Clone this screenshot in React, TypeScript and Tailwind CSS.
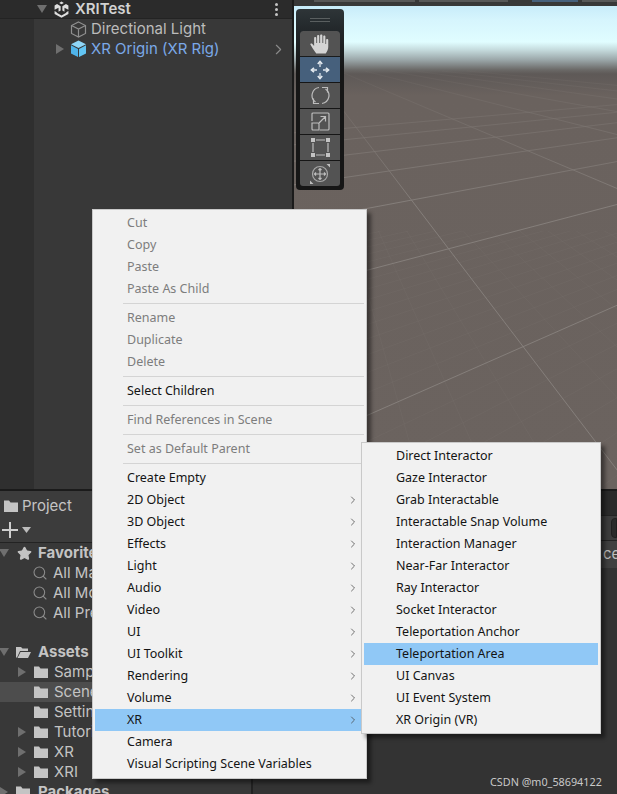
import type { ReactNode } from "react";
import { ChevronRight, Search, Star } from "lucide-react";

const sans = "font-['Inter','Noto_Sans',sans-serif]";
const menuFont = "font-['Noto_Sans','Noto_Sans_CJK_SC',sans-serif]";

type MenuEntry = { label?: string; off?: boolean; sub?: boolean; on?: boolean };

const mainMenu: MenuEntry[] = [
  { label: "Cut", off: true },
  { label: "Copy", off: true },
  { label: "Paste", off: true },
  { label: "Paste As Child", off: true },
  {},
  { label: "Rename", off: true },
  { label: "Duplicate", off: true },
  { label: "Delete", off: true },
  {},
  { label: "Select Children" },
  {},
  { label: "Find References in Scene", off: true },
  {},
  { label: "Set as Default Parent", off: true },
  {},
  { label: "Create Empty" },
  { label: "2D Object", sub: true },
  { label: "3D Object", sub: true },
  { label: "Effects", sub: true },
  { label: "Light", sub: true },
  { label: "Audio", sub: true },
  { label: "Video", sub: true },
  { label: "UI", sub: true },
  { label: "UI Toolkit", sub: true },
  { label: "Rendering", sub: true },
  { label: "Volume", sub: true },
  { label: "XR", sub: true, on: true },
  { label: "Camera" },
  { label: "Visual Scripting Scene Variables" },
];

const xrMenu: MenuEntry[] = [
  { label: "Direct Interactor" },
  { label: "Gaze Interactor" },
  { label: "Grab Interactable" },
  { label: "Interactable Snap Volume" },
  { label: "Interaction Manager" },
  { label: "Near-Far Interactor" },
  { label: "Ray Interactor" },
  { label: "Socket Interactor" },
  { label: "Teleportation Anchor" },
  { label: "Teleportation Area", on: true },
  { label: "UI Canvas" },
  { label: "UI Event System" },
  { label: "XR Origin (VR)" },
];

function Menu({ items, className }: { items: MenuEntry[]; className: string }) {
  return (
    <div
      className={`absolute flex flex-col border border-[#c9c9c9] bg-[#f1f1f1] shadow-[4px_4px_4px_rgba(0,0,0,0.45)] ${menuFont} ${className}`}
    >
      {items.map((item, i) =>
        item.label ? (
          <div
            key={item.label}
            className={`mx-[2px] flex h-[22px] shrink-0 items-center justify-between pl-8 pr-[5px] text-[12.5px] ${
              item.on ? "bg-[#90c8f6]" : ""
            } ${item.off ? "text-[#7d7d7d]" : "text-[#141414]"}`}
          >
            <span>{item.label}</span>
            {item.sub && <ChevronRight size={12} strokeWidth={1.5} className="text-[#444444]" />}
          </div>
        ) : (
          <div key={i} className="my-[3px] ml-[30px] mr-[2px] h-px shrink-0 bg-[#d4d4d4]" />
        ),
      )}
    </div>
  );
}

function Caret({ open, className = "" }: { open?: boolean; className?: string }) {
  return (
    <svg width="10" height="10" viewBox="0 0 10 10" className={`shrink-0 ${className}`}>
      <path d={open ? "M0 1h10L5 9z" : "M1 0l8 5-8 5z"} fill="#6f6f6f" />
    </svg>
  );
}

function Folder({ open }: { open?: boolean }) {
  return (
    <svg width="16" height="14" viewBox="0 0 16 14" className="shrink-0">
      {open ? (
        <path d="M1 2h5l1.500 1.500H13V6H5L2 12.500H1zM5.500 7H16l-3 6H2.500z" fill="#c4c4c4" />
      ) : (
        <path d="M1 1.500h5l1.500 2H15V13H1z" fill="#c4c4c4" />
      )}
    </svg>
  );
}

function TreeRow({
  icon,
  label,
  pad,
  caret,
  open,
  bold,
  active,
}: {
  icon?: ReactNode;
  label: string;
  pad: string;
  caret?: boolean;
  open?: boolean;
  bold?: boolean;
  active?: boolean;
}) {
  return (
    <div className={`flex h-5 shrink-0 items-center ${pad} ${active ? "bg-[#4d4d4d]" : ""}`}>
      <div className="flex w-[16px] shrink-0 items-center">{caret && <Caret open={open} />}</div>
      <div className="flex w-[21px] shrink-0 items-center">{icon}</div>
      <span className={`whitespace-nowrap text-[15px] text-[#c4c4c4] ${bold ? "ml-[2px] font-bold" : ""}`}>{label}</span>
    </div>
  );
}

function UnityMark() {
  return (
    <svg width="17" height="17" viewBox="0 0 16 16" className="shrink-0">
      <path
        d="M8 0.500l2.200 1.300-2.200 1.200-2.200-1.200zM1.500 4.200l2.300-1.300 3.400 2v4l-2 1.200V6.300L1.500 8.300zM14.500 4.200l-2.300-1.300-3.400 2v4l2 1.200V6.300l3.700 2zM1.500 9.500l2 1.200v.3l4.500 2.600 4.500-2.600v-.3l2-1.200v2.700L8 15.800l-6.500-3.600z"
        fill="#dedede"
      />
    </svg>
  );
}

function LightCube() {
  return (
    <svg width="17" height="17" viewBox="0 0 17 17" fill="none" stroke="#8f8f8f" strokeWidth="1.200" className="shrink-0">
      <path d="M8.500 1L15.500 4.500V12.500L8.500 16L1.500 12.500V4.500zM1.500 4.500L8.500 8L15.500 4.500M8.500 8V16" />
    </svg>
  );
}

function BlueCube() {
  return (
    <svg width="17" height="18" viewBox="0 0 17 18" className="shrink-0">
      <path d="M8.500 0.500L16 4.300L8.500 8L1 4.300z" fill="#8fd6f7" />
      <path d="M1 5.300L8 8.900V17L1 13.400z" fill="#4fb4ea" />
      <path d="M16 5.300L9 8.900V17L16 13.400z" fill="#62c4f2" />
    </svg>
  );
}

const toolIcon = { fill: "none", stroke: "#bdbdbd", strokeWidth: 1.2 };

function ToolButton({ active, first, children }: { active?: boolean; first?: boolean; children: ReactNode }) {
  return (
    <div
      className={`flex h-[25px] w-10 items-center justify-center ${first ? "rounded-t-[3px]" : ""} ${
        active ? "bg-[#46607c]" : "bg-[#535353]"
      }`}
    >
      {children}
    </div>
  );
}

function SceneTools() {
  return (
    <div className="absolute left-[2px] top-[3px] flex w-12 flex-col items-center rounded-[4px] bg-[linear-gradient(#2e3538_0,#22272a_22px,#161616_60px)] pb-1">
      <div className="flex h-[22px] w-5 flex-col justify-center gap-[2px]">
        <div className="h-px bg-[#5a5f60]" />
        <div className="h-px bg-[#5a5f60]" />
      </div>
      <div className="flex flex-col gap-px overflow-hidden rounded-[3px]">
        <ToolButton first>
          <svg width="20" height="20" viewBox="0 0 16 20" preserveAspectRatio="none">
            <path
              d="M5 19.500C3 16 1.500 13 0.300 10.500c-.3-1 1-1.500 1.600-.6L3.300 12V4c0-1.200 1.700-1.200 1.700 0V9h.7V2c0-1.200 1.700-1.200 1.700 0v7h.7V1.500c0-1.200 1.800-1.200 1.800 0V9h.7V2.500c0-1.200 1.700-1.200 1.700 0V10h.6V6c0-1.200 1.700-1.200 1.700 0v7c0 2.500-1 4.500-2 6.500z"
              fill="#d4d4d4"
            />
          </svg>
        </ToolButton>
        <ToolButton active>
          <svg width="20" height="20" viewBox="0 0 20 20" fill="none" stroke="#e2e8ee" strokeWidth="1.300">
            <path d="M10 1.500V7M10 13v5.500M1.500 10H7M13 10h5.500" />
            <path d="M7.800 4L10 1.500 12.200 4M7.800 16l2.200 2.500 2.200-2.500M4 7.800L1.500 10 4 12.200M16 7.800l2.500 2.200L16 12.200" strokeWidth="1.700" />
          </svg>
        </ToolButton>
        <ToolButton>
          <svg width="19" height="19" viewBox="0 0 19 19" {...toolIcon}>
            <path d="M8 1.500A8 8 0 0 0 4.500 16M11 17.500A8 8 0 0 0 14.500 3" />
            <path d="M2.500 12.500V17.500H8M16.500 6.500V1.500H11" />
          </svg>
        </ToolButton>
        <ToolButton>
          <svg width="19" height="19" viewBox="0 0 19 19" {...toolIcon}>
            <path d="M1 9V2a1 1 0 0 1 1-1h15a1 1 0 0 1 1 1v15a1 1 0 0 1-1 1H9" />
            <path d="M1 11h6a1 1 0 0 1 1 1v6H2a1 1 0 0 1-1-1zM8 11l6.500-6.500M9.500 4.500h5v5" />
          </svg>
        </ToolButton>
        <ToolButton>
          <svg width="19" height="19" viewBox="0 0 19 19">
            <path d="M2 5v9M17 5v9M5 2h9M5 17h9" stroke="#bdbdbd" strokeWidth="1.200" />
            <path d="M0 0h4v4H0zM15 0h4v4h-4zM0 15h4v4H0zM15 15h4v4h-4z" fill="#c4c4c4" />
          </svg>
        </ToolButton>
        <ToolButton>
          <svg width="20" height="20" viewBox="0 0 20 20" {...toolIcon}>
            <circle cx="10" cy="10" r="7.500" stroke="#a8a8a8" />
            <path d="M10 4.500v11M4.500 10h11M8.500 6L10 4.500 11.500 6M8.500 14l1.500 1.500 1.500-1.500M6 8.500L4.500 10 6 11.500M14 8.500l1.500 1.500-1.500 1.500" />
            <path d="M20 0v3.500L16.500 0zM0 20v-3.500L3.500 20z" fill="#bdbdbd" stroke="none" />
          </svg>
        </ToolButton>
      </div>
    </div>
  );
}

// ground grid: lines of each family are evenly spaced on any horizontal screen line
const horizon = 49;
const vpA = 7;
const vpB = 891;

function GridLines() {
  const lines: ReactNode[] = [];
  for (let k = -30; k <= 60; k++) {
    const major = k % 10 === 0;
    const ax = 147 + 31 * k;
    lines.push(
      <line
        key={`a${k}`}
        x1={vpA + (ax * 16) / 193}
        y1={horizon + 16}
        x2={vpA + (ax * 445) / 193}
        y2={horizon + 445}
        stroke={major ? "url(#fade)" : "#8d8783"}
        strokeWidth={major ? 1 : 0.7}
        opacity={major ? 1 : 0.16}
        clipPath={major ? undefined : "url(#near)"}
      />,
    );
    const bx = 335 - 37.5 * k;
    const run = vpB - bx;
    if (run <= 0) continue;
    const slope = 245 / run;
    lines.push(
      <line
        key={`b${k}`}
        x1={0}
        y1={horizon + slope * vpB}
        x2={324}
        y2={horizon + slope * (vpB - 324)}
        stroke={major ? "url(#fade)" : "#8d8783"}
        strokeWidth={major ? 1 : 0.7}
        opacity={major ? 1 : 0.16}
        clipPath={major ? undefined : "url(#near)"}
      />,
    );
  }
  return (
    <svg width="324" height="486" viewBox="0 0 324 486" className="absolute left-0 top-0">
      <defs>
        <linearGradient id="fade" gradientUnits="userSpaceOnUse" x1="0" y1="64" x2="0" y2="200">
          <stop offset="0" stopColor="#7c7571" stopOpacity="0.1" />
          <stop offset="0.5" stopColor="#7c7571" stopOpacity="0.7" />
          <stop offset="1" stopColor="#87817d" stopOpacity="0.9" />
        </linearGradient>
        <clipPath id="near">
          <rect x="0" y="225" width="324" height="261" />
        </clipPath>
        <clipPath id="ground">
          <rect x="0" y="64" width="324" height="422" />
        </clipPath>
      </defs>
      <g clipPath="url(#ground)">{lines}</g>
    </svg>
  );
}

function Hierarchy() {
  return (
    <div className={`flex h-full w-[292px] shrink-0 flex-col bg-[#383838] ${sans}`}>
      <div className="flex h-[19px] shrink-0 items-center border-b border-[#232323] bg-[#2b2b2b] pl-[37px] pr-[14px]">
        <Caret open />
        <div className="ml-[6px] flex items-center">
          <UnityMark />
        </div>
        <span className="ml-[5px] flex-1 text-[15px] font-semibold text-[#d2d2d2]">XRITest</span>
        <div className="flex flex-col gap-[2px]">
          <div className="size-[3px] rounded-full bg-[#c4c4c4]" />
          <div className="size-[3px] rounded-full bg-[#c4c4c4]" />
          <div className="size-[3px] rounded-full bg-[#c4c4c4]" />
        </div>
      </div>
      <div className="flex flex-1">
        <div className="w-[34px] shrink-0 bg-[#2f2f2f]" />
        <div className="flex flex-1 flex-col">
          <div className="flex h-5 items-center pl-[36px]">
            <LightCube />
            <span className="ml-[4px] text-[15px] text-[#bcbcbc]">Directional Light</span>
          </div>
          <div className="flex h-5 items-center pl-[21px] pr-[5px]">
            <Caret className="mr-[5px]" />
            <BlueCube />
            <span className="ml-[4px] flex-1 text-[15px] text-[#7ba9e8]">XR Origin (XR Rig)</span>
            <ChevronRight size={17} strokeWidth={1.6} className="text-[#8a8a8a]" />
          </div>
        </div>
      </div>
    </div>
  );
}

function ProjectPanel() {
  const search = <Search size={16} strokeWidth={1.6} className="text-[#8c8c8c]" />;
  return (
    <div className={`flex w-[253px] shrink-0 flex-col border-r-2 border-[#222222] bg-[#383838] ${sans}`}>
      <div className="flex h-[26px] shrink-0 items-center gap-[3px] bg-[#3c3c3c] pl-[3px] pt-1">
        <Folder />
        <span className="text-[15px] text-[#c4c4c4]">Project</span>
      </div>
      <div className="flex h-[26px] shrink-0 items-center gap-1 border-b border-[#232323] bg-[#3c3c3c] pl-[2px]">
        <svg width="16" height="16" viewBox="0 0 16 16">
          <path d="M8 0v16M0 8h16" stroke="#cfcfcf" strokeWidth="2" />
        </svg>
        <svg width="9" height="6" viewBox="0 0 9 6">
          <path d="M0 0h9L4.500 6z" fill="#bdbdbd" />
        </svg>
      </div>
      <TreeRow pad="-ml-[1px]" caret open bold label="Favorites" icon={<Star size={15} fill="#c4c4c4" stroke="#c4c4c4" className="ml-[2px]" />} />
      <TreeRow pad="pl-[16px]" label="All Materials" icon={search} />
      <TreeRow pad="pl-[16px]" label="All Models" icon={search} />
      <TreeRow pad="pl-[16px]" label="All Prefabs" icon={search} />
      <div className="h-[19px] shrink-0" />
      <TreeRow pad="-ml-[1px]" caret open bold label="Assets" icon={<Folder open />} />
      <TreeRow pad="pl-[17px]" caret label="Samples" icon={<Folder />} />
      <TreeRow pad="pl-[17px]" active label="Scenes" icon={<Folder />} />
      <TreeRow pad="pl-[17px]" label="Settings" icon={<Folder />} />
      <TreeRow pad="pl-[17px]" caret label="Tutorials" icon={<Folder />} />
      <TreeRow pad="pl-[17px]" caret label="XR" icon={<Folder />} />
      <TreeRow pad="pl-[17px]" caret label="XRI" icon={<Folder />} />
      <TreeRow pad="-ml-[1px]" caret bold label="Packages" icon={<Folder />} />
    </div>
  );
}

function InspectorStub() {
  return (
    <div className={`flex flex-1 flex-col bg-[#333333] ${sans}`}>
      <div className="h-[25px] shrink-0 border-b border-[#232323] bg-[#2a2a2a]" />
      <div className="flex h-[25px] shrink-0 items-center justify-end border-b border-[#232323] bg-[#3c3c3c]">
        <div className="h-[20px] w-[6px] rounded-l-[4px] border border-[#1f1f1f] bg-[#2a2a2a]" />
      </div>
      <div className="flex h-[27px] shrink-0 items-center justify-end bg-[#404040] text-[15px] text-[#bdbdbd]">
        <span className="w-[14px] overflow-hidden whitespace-nowrap">ce</span>
      </div>
    </div>
  );
}

export default function App() {
  return (
    <div className="relative flex h-[794px] w-[617px] flex-col overflow-hidden bg-[#333333]">
      <div className="flex h-[491px] shrink-0 border-b-2 border-[#1b1b1b]">
        <Hierarchy />
        <div className="w-[2px] shrink-0 bg-[#1b1b1b]" />
        <div className="flex min-w-0 flex-1 flex-col">
          <div className="flex h-[6px] shrink-0 items-start bg-[#383838] pl-5">
            <div className="h-[2px] w-[101px] bg-[#585858]" />
            <div className="ml-1 h-[2px] w-[89px] bg-[#585858]" />
            <div className="ml-6 h-[2px] w-[46px] bg-[#46607c]" />
            <div className="ml-1 h-[2px] flex-1 bg-[#585858]" />
          </div>
          <div className="relative flex-1 overflow-hidden bg-[linear-gradient(#c8ecfa_0,#d6f5fd_14px,#e0fdff_36px,#c4dadc_44px,#9aa6a8_54px,#6a6866_64px,#5e5957_68px,#6a625e_90px,#6b635f_100%)]">
            <GridLines />
            <SceneTools />
          </div>
        </div>
      </div>
      <div className="flex min-h-0 flex-1">
        <ProjectPanel />
        <InspectorStub />
      </div>
      <Menu items={mainMenu} className="left-[92px] top-[209px] h-[570px] w-[275px] pt-[2px]" />
      <Menu items={xrMenu} className="left-[361px] top-[442px] h-[292px] w-[240px] pt-[2px]" />
      <span className="absolute left-[490px] top-[774px] text-[10.8px] text-[#c9c9c9] font-['Noto_Sans',sans-serif]">
        CSDN @m0_58694122
      </span>
    </div>
  );
}
